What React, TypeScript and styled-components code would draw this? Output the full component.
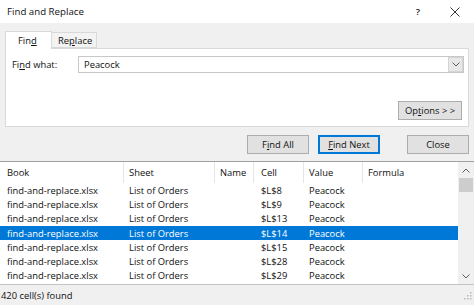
import React from "react";
import styled, { createGlobalStyle } from "styled-components";

const GlobalStyle = createGlobalStyle`
  html, body {
    margin: 0;
    padding: 0;
    background: #f0f0f0;
  }
  body {
    font-family: "Open Sans", "Noto Sans", sans-serif;
    font-size: 9.4px;
    color: #111;
  }
`;

const COLUMNS = "124px 91px 39px 50px 59px 1fr";

const Dialog = styled.div`
  width: 474px;
  height: 305px;
  display: flex;
  flex-direction: column;
  overflow: hidden;
  background: #f0f0f0;
`;

const TitleBar = styled.div`
  height: 23px;
  flex: none;
  background: #fff;
  display: flex;
  align-items: center;
  justify-content: space-between;
  padding-left: 7px;
`;

const Title = styled.span`
  font-size: 9.7px;
`;

const TitleControls = styled.div`
  display: flex;
  align-items: center;
  height: 100%;
`;

const TitleButton = styled.div<{ $w: number }>`
  width: ${(p) => p.$w}px;
  height: 100%;
  display: flex;
  align-items: center;
  justify-content: center;
  font-size: 9.5px;
  font-weight: 600;
  color: #222;
`;

const Body = styled.div`
  flex: none;
  padding: 8px 5px 7px 5px;
`;

const TabStrip = styled.div`
  display: flex;
  align-items: flex-end;
  height: 17px;
`;

const Tab = styled.div<{ $active?: boolean }>`
  height: ${(p) => (p.$active ? 18 : 16)}px;
  margin-bottom: ${(p) => (p.$active ? -1 : 0)}px;
  width: ${(p) => (p.$active ? 47 : 45)}px;
  padding-left: ${(p) => (p.$active ? 12 : 6)}px;
  display: flex;
  align-items: center;
  box-sizing: border-box;
  background: ${(p) => (p.$active ? "#fff" : "#f3f3f3")};
  border: 1px solid #d9d9d9;
  border-bottom: ${(p) => (p.$active ? "none" : "1px solid #d9d9d9")};
  border-left: ${(p) => (p.$active ? "1px solid #d9d9d9" : "none")};
  position: relative;
  z-index: ${(p) => (p.$active ? 1 : 0)};
`;

const Panel = styled.div`
  height: 79px;
  box-sizing: border-box;
  background: #fff;
  border: 1px solid #d9d9d9;
  display: flex;
  flex-direction: column;
  justify-content: space-between;
  padding: 7px 4px 6px 6px;
`;

const FieldRow = styled.div`
  display: flex;
  align-items: center;
`;

const FieldLabel = styled.span`
  width: 66px;
`;

const Combo = styled.div`
  flex: 1;
  height: 17px;
  box-sizing: border-box;
  border: 1px solid #c8c8c8;
  display: flex;
  align-items: center;
  padding-left: 5px;
`;

const ComboText = styled.span`
  flex: 1;
`;

const ComboArrow = styled.div`
  width: 15px;
  height: 15px;
  box-sizing: border-box;
  border: 1px solid #d4d4d4;
  background: #e8e8e8;
  display: flex;
  align-items: center;
  justify-content: center;
`;

const OptionsRow = styled.div`
  display: flex;
  justify-content: flex-end;
  padding-right: 2px;
`;

const Button = styled.div<{ $default?: boolean; $w?: number }>`
  width: ${(p) => p.$w ?? 62}px;
  height: 19px;
  box-sizing: border-box;
  background: #e1e1e1;
  border: ${(p) => (p.$default ? "2px solid #0078d7" : "1px solid #adadad")};
  display: flex;
  align-items: center;
  justify-content: center;
`;

const ButtonRow = styled.div`
  display: flex;
  justify-content: flex-end;
  margin-top: 8px;
  gap: 9px;
`;

const Spacer = styled.div`
  width: 9px;
`;

const List = styled.div`
  flex: 1;
  min-height: 0;
  background: #fff;
  border-top: 1px solid #a0a0a0;
  display: flex;
`;

const Table = styled.div`
  flex: 1;
  display: flex;
  flex-direction: column;
`;

const HeaderRow = styled.div`
  height: 21px;
  display: grid;
  grid-template-columns: ${COLUMNS};
  align-items: stretch;
`;

const HeaderCell = styled.div<{ $pad?: number; $last?: boolean }>`
  display: flex;
  align-items: center;
  padding-left: ${(p) => p.$pad ?? 5}px;
  border-right: ${(p) => (p.$last ? "none" : "1px solid #e5e5e5")};
`;

const Row = styled.div<{ $selected?: boolean }>`
  height: 14.3px;
  display: grid;
  grid-template-columns: ${COLUMNS};
  align-items: center;
  background: ${(p) => (p.$selected ? "#0078d7" : "transparent")};
  color: ${(p) => (p.$selected ? "#fff" : "#111")};
`;

const Cell = styled.div<{ $pad?: number }>`
  padding-left: ${(p) => p.$pad ?? 5}px;
  white-space: nowrap;
  overflow: hidden;
`;

const ScrollBar = styled.div`
  width: 16px;
  flex: none;
  background: #f0f0f0;
  display: flex;
  flex-direction: column;
  align-items: center;
`;

const ScrollArrow = styled.div`
  height: 16px;
  width: 16px;
  display: flex;
  align-items: center;
  justify-content: center;
`;

const ScrollThumb = styled.div`
  width: 14px;
  height: 14px;
  background: #cdcdcd;
`;

const ScrollTrack = styled.div`
  flex: 1;
`;

const StatusBar = styled.div`
  height: 21px;
  flex: none;
  box-sizing: border-box;
  border-top: 1px solid #c4c4c4;
  background: #f0f0f0;
  display: flex;
  align-items: center;
  justify-content: space-between;
  padding: 0 2px 0 1px;
`;

const U = styled.span`
  text-decoration: underline;
  text-underline-offset: 1px;
`;

const Chevron = ({ up }: { up?: boolean }) => (
  <svg width="8" height="5" viewBox="0 0 8 5">
    <path
      d={up ? "M0.5 4.5 L4 1 L7.5 4.5" : "M0.5 0.5 L4 4 L7.5 0.5"}
      fill="none"
      stroke="#606060"
      strokeWidth="1"
    />
  </svg>
);

const Grip = () => (
  <svg width="10" height="10" viewBox="0 0 10 10">
    {[
      [8, 2],
      [8, 5],
      [5, 5],
      [8, 8],
      [5, 8],
      [2, 8],
    ].map(([x, y], i) => (
      <rect key={i} x={x} y={y} width="1.5" height="1.5" fill="#b8b8b8" />
    ))}
  </svg>
);

const rows = [
  { cell: "$L$8" },
  { cell: "$L$9" },
  { cell: "$L$13" },
  { cell: "$L$14", selected: true },
  { cell: "$L$15" },
  { cell: "$L$28" },
  { cell: "$L$29" },
];

export default function App() {
  return (
    <Dialog>
      <GlobalStyle />
      <TitleBar>
        <Title>Find and Replace</Title>
        <TitleControls>
          <TitleButton $w={36}>?</TitleButton>
          <TitleButton $w={38}>
            <svg width="10" height="10" viewBox="0 0 10 10">
              <path d="M0.5 0.5 L9.5 9.5 M9.5 0.5 L0.5 9.5" stroke="#333" strokeWidth="1" />
            </svg>
          </TitleButton>
        </TitleControls>
      </TitleBar>
      <Body>
        <TabStrip>
          <Tab $active>
            Fin<U>d</U>
          </Tab>
          <Tab>
            Re<U>p</U>lace
          </Tab>
        </TabStrip>
        <Panel>
          <FieldRow>
            <FieldLabel>
              Fi<U>n</U>d what:
            </FieldLabel>
            <Combo>
              <ComboText>Peacock</ComboText>
              <ComboArrow>
                <Chevron />
              </ComboArrow>
            </Combo>
          </FieldRow>
          <OptionsRow>
            <Button $w={64}>
              Op<U>t</U>ions &gt; &gt;
            </Button>
          </OptionsRow>
        </Panel>
        <ButtonRow>
          <Button>
            F<U>i</U>nd All
          </Button>
          <Button $default>
            <U>F</U>ind Next
          </Button>
          <Spacer />
          <Button>Close</Button>
        </ButtonRow>
      </Body>
      <List>
        <Table>
          <HeaderRow>
            <HeaderCell $pad={7}>Book</HeaderCell>
            <HeaderCell>Sheet</HeaderCell>
            <HeaderCell>Name</HeaderCell>
            <HeaderCell $pad={7}>Cell</HeaderCell>
            <HeaderCell>Value</HeaderCell>
            <HeaderCell $last>Formula</HeaderCell>
          </HeaderRow>
          {rows.map((r) => (
            <Row key={r.cell} $selected={r.selected}>
              <Cell $pad={7}>find-and-replace.xlsx</Cell>
              <Cell>List of Orders</Cell>
              <Cell />
              <Cell $pad={7}>{r.cell}</Cell>
              <Cell>Peacock</Cell>
              <Cell />
            </Row>
          ))}
        </Table>
        <ScrollBar>
          <ScrollArrow>
            <Chevron up />
          </ScrollArrow>
          <ScrollThumb />
          <ScrollTrack />
          <ScrollArrow>
            <Chevron />
          </ScrollArrow>
        </ScrollBar>
      </List>
      <StatusBar>
        <span>420 cell(s) found</span>
        <Grip />
      </StatusBar>
    </Dialog>
  );
}
